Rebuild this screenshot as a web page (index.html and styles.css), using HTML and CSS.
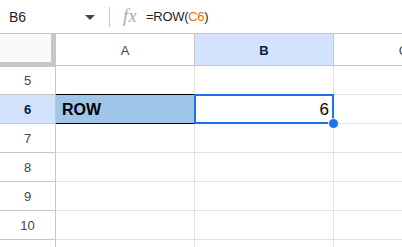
FILE: index.html
```html
<!DOCTYPE html>
<html>
<head>
<meta charset="utf-8">
<link rel="stylesheet" href="styles.css">
</head>
<body>
<div class="fbar">
  <div class="namebox">
    <span class="ref">B6</span>
    <svg class="caret" width="10" height="5" viewBox="0 0 10 5"><path d="M0 0h10L5 5z" fill="#444746"/></svg>
  </div>
  <div class="divider"></div>
  <span class="fx">fx</span>
  <span class="formula">=ROW(<span class="arg">C6</span>)</span>
</div>
<div class="grid">
  <div class="corner"></div>
  <div class="colh">A</div>
  <div class="colh sel">B</div>
  <div class="colh last"><span class="clabel">C</span></div>

  <div class="rowh">5</div><div class="cell"></div><div class="cell"></div><div class="cell last"></div>
  <div class="rowh sel">6</div><div class="cell rowcell">ROW</div><div class="cell num active">6<span class="frame"></span><span class="handle"></span></div><div class="cell last"></div>
  <div class="rowh">7</div><div class="cell"></div><div class="cell"></div><div class="cell last"></div>
  <div class="rowh">8</div><div class="cell"></div><div class="cell"></div><div class="cell last"></div>
  <div class="rowh">9</div><div class="cell"></div><div class="cell"></div><div class="cell last"></div>
  <div class="rowh">10</div><div class="cell"></div><div class="cell"></div><div class="cell last"></div>
  <div class="rowh"></div><div class="cell"></div><div class="cell"></div><div class="cell last"></div>
</div>
</body>
</html>
```
FILE: styles.css
```css
* { box-sizing: border-box; }
html, body { margin: 0; padding: 0; background: #fff; overflow: hidden; }
body { font-family: "Liberation Sans", Arial, sans-serif; width: 402px; height: 247px; }

.fbar {
  height: 34px;
  border-bottom: 1px solid #c4c7c5;
  display: flex;
  align-items: center;
}
.namebox {
  width: 103px;
  display: flex;
  align-items: center;
  justify-content: space-between;
  padding: 0 8px 0 9px;
}
.ref { font-size: 14px; color: #1f1f1f; }
.caret { display: block; margin-top: 1px; }
.divider { width: 1px; height: 20px; background: #c4c7c5; margin-left: 6px; }
.fx {
  font-family: "Liberation Serif", "Times New Roman", serif;
  font-style: italic;
  font-size: 18px;
  color: #a6a9ac;
  margin-left: 13px;
  letter-spacing: 0.5px;
}
.formula { font-size: 13px; color: #1f1f1f; margin-left: 9px; letter-spacing: -0.3px; }
.arg { color: #e37400; }

.grid {
  display: grid;
  grid-template-columns: 56px 139px 139px 139px;
  grid-template-rows: 32px repeat(7, 29px);
  width: 402px;
  overflow: hidden;
}
.corner {
  background: #f8f9fa;
  border-right: 5px solid #c4c7c5;
  border-bottom: 5px solid #c4c7c5;
  margin-bottom: -1px;
}
.colh {
  border-right: 1px solid #c4c7c5;
  border-bottom: 1px solid #c4c7c5;
  display: flex;
  align-items: center;
  justify-content: center;
  font-size: 13px;
  color: #444746;
  padding-top: 1px;
}
.colh.sel { background: #d3e3fd; color: #041e49; font-weight: bold; }
.rowh {
  border-right: 1px solid #c4c7c5;
  border-bottom: 1px solid #c4c7c5;
  display: flex;
  align-items: center;
  justify-content: center;
  font-size: 13px;
  color: #444746;
}
.rowh.sel { background: #d3e3fd; color: #041e49; font-weight: bold; }
.cell {
  border-right: 1px solid #e1e3e1;
  border-bottom: 1px solid #e1e3e1;
  position: relative;
}
.last { border-right: none; }
.rowcell {
  background: #9fc5e8;
  border-top: 1px solid #000;
  border-bottom: 1px solid #000;
  margin-top: -1px;
  font-weight: bold;
  font-size: 16px;
  color: #000;
  display: flex;
  align-items: center;
  padding-left: 6px;
  padding-top: 2px;
}
.num {
  display: flex;
  align-items: center;
  justify-content: flex-end;
  padding-right: 4px;
  padding-top: 2px;
  font-size: 17px;
  color: #000;
}
.active { z-index: 2; }
.frame {
  position: absolute;
  left: -1px; top: -1px; right: -1px; bottom: -1px;
  border: 2px solid #1a73e8;
}
.handle {
  position: absolute;
  right: -6px; bottom: -6px;
  width: 11px; height: 11px;
  border-radius: 50%;
  background: #1a73e8;
  border: 1px solid #fff;
}
```
